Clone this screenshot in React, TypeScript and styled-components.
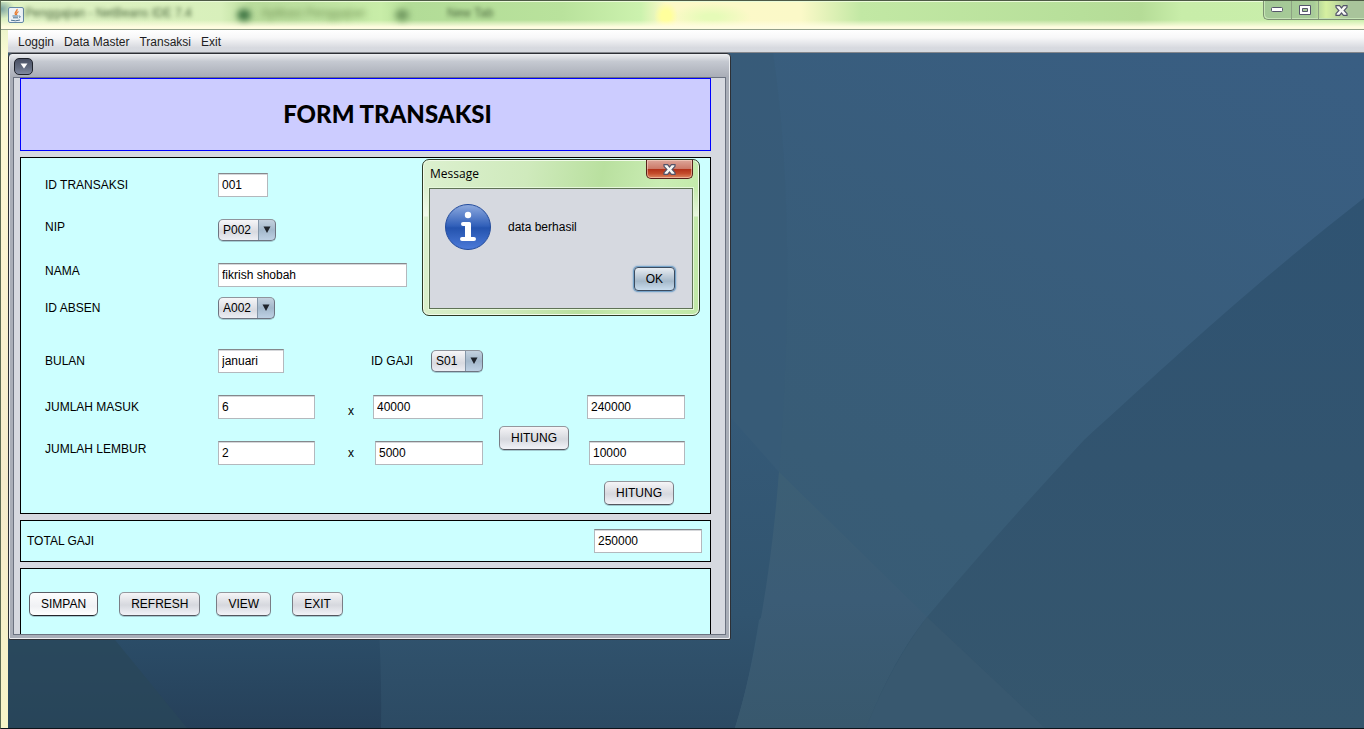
import React from 'react';
import styled, { createGlobalStyle, css } from 'styled-components';

const GlobalStyle = createGlobalStyle`
  *, *::before, *::after { box-sizing: border-box; }
  body {
    margin: 0;
    font-family: "Liberation Sans", Arial, sans-serif;
    font-size: 12px;
    line-height: 16px;
    color: #000;
  }
  button, input, select { font: inherit; color: inherit; margin: 0; }
`;

const AppWindow = styled.div`
  position: relative;
  display: flex;
  flex-direction: column;
  min-height: 100vh;
  overflow: hidden;
  padding-left: 7px;
  border-top: 1px solid #4d5a45;
  border-left: 1px solid #5d6b52;
  border-bottom: 1px solid #0c141a;
  background: linear-gradient(180deg, #dcefc0 0, #fdfbd6 60px, #fbf4d0 240px, #f5ebcb 480px, #f8f5c8 100%);
`;

const TitleBar = styled.header`
  position: relative;
  display: flex;
  justify-content: space-between;
  height: 29px;
  margin-left: -7px;
  padding-left: 7px;
  border-bottom: 1px solid #93a08a;
  box-shadow: inset 0 1px 0 #eafbd9;
  background:
    radial-gradient(ellipse 14px 10px at 0 8px, #7ba3a0 0, rgba(123, 163, 160, 0) 100%),
    linear-gradient(180deg, rgba(255, 255, 225, 0) 19px, #fffde0 26px),
    radial-gradient(ellipse 12px 14px at 665px 15px, #ffff9c 40%, rgba(255, 255, 156, 0) 100%),
    radial-gradient(ellipse 40px 14px at 710px 16px, #e6fbb8 20%, rgba(230, 251, 184, 0) 100%),
    linear-gradient(90deg, #dff2c4 0, #d8f0bb 220px, #b9dc9c 250px, #bfe3a2 320px, #c8eda8 380px, #b2dc97 410px, #b9e29c 560px, #ccf2ae 640px, #fdf9c8 665px, #fbf9c8 800px, #c2e8a4 860px, #b7df9a 1080px, #b5dc97 1140px, #c8eda9 1180px, #c9eeab 100%);
`;

const AppIcon = styled.svg`
  width: 16px;
  height: 16px;
  margin-top: 6px;
  display: block;
`;

const GlassText = styled.span<{ $left: number; $tone?: string; $blur?: number }>`
  position: absolute;
  top: 4px;
  left: ${p => p.$left}px;
  color: ${p => p.$tone || '#46633a'};
  filter: blur(${p => p.$blur || 2}px);
  white-space: nowrap;
`;

const GlassDot = styled.span<{ $left: number; $tone: string }>`
  position: absolute;
  top: 8px;
  left: ${p => p.$left}px;
  width: 14px;
  height: 12px;
  border-radius: 50%;
  background: ${p => p.$tone};
  filter: blur(3px);
`;

const WindowControls = styled.div`
  display: flex;
  height: 19px;
  border: 1px solid #7c9072;
  border-top: 0;
  border-right: 0;
  border-radius: 0 0 0 5px;
  background: linear-gradient(90deg, #a3c896 0, #a8cc98 50%, #d6f0a0 62%, #a9c49b 85%);
  box-shadow: inset 1px -1px 0 #c6e4b6;
`;

const ControlButton = styled.button<{ $wide?: boolean }>`
  display: flex;
  align-items: center;
  justify-content: center;
  width: ${p => (p.$wide ? 46 : 27)}px;
  padding: 0;
  border: 0;
  background: none;
  & + & { border-left: 1px solid #8da383; }
`;

const MenuBar = styled.nav`
  display: flex;
  gap: 10px;
  height: 23px;
  padding: 4px 10px 3px;
  border-bottom: 1px solid #83868c;
  background: linear-gradient(180deg, #fff 0, #f7f7f8 35%, #d8dae0 80%, #d6d9df 100%);
`;

const MenuButton = styled.button`
  padding: 0;
  border: 0;
  background: none;
  color: #1d1d22;
`;

const Desktop = styled.main`
  position: relative;
  flex: 1;
  min-height: 640px;
  background: #355a78;
`;

const Wallpaper = styled.svg`
  position: absolute;
  inset: 0;
  width: 100%;
  height: 100%;
`;

const InternalFrame = styled.section`
  position: absolute;
  top: 0;
  left: 0;
  width: 723px;
  padding: 0 4px 4px;
  border: 1px solid #2d3036;
  border-radius: 4px 4px 2px 2px;
  background: #a9aeb8;
  box-shadow: inset 1px 1px 0 #eceef1, inset -1px -1px 0 #eceef1;
`;

const FrameTitle = styled.div`
  display: flex;
  align-items: center;
  height: 22px;
  margin: 1px -3px 0;
  padding-left: 4px;
  background: linear-gradient(180deg, #e8eaed 0, #c5c9d1 30%, #a9adb7 100%);
`;

const FrameMenuButton = styled.button`
  display: flex;
  align-items: center;
  justify-content: center;
  width: 19px;
  height: 17px;
  padding: 0;
  border: 1px solid #20242d;
  border-radius: 5px;
  background: linear-gradient(180deg, #495063 0, #656e82 60%, #8089a0 100%);
`;

const FrameContent = styled.div`
  display: flex;
  flex-direction: column;
  gap: 6px;
  padding: 0 14px 0 6px;
  border: 1px solid #6b7280;
  background: #d6d9e0;
`;

const Banner = styled.h1`
  display: flex;
  align-items: center;
  justify-content: center;
  height: 73px;
  margin: 0;
  padding: 0 0 2px 44px;
  border: 1px solid #0000ff;
  background: #ccccff;
  font-family: Lato, sans-serif;
  font-size: 24px;
  font-weight: 900;
  line-height: 28px;
`;

const panel = css`
  border: 1px solid #000;
  background: #ccffff;
`;

const FormPanel = styled.form`
  ${panel}
  display: flex;
  flex-direction: column;
  height: 357px;
  padding: 15px 24px 0;
`;

const Row = styled.div<{ $gap?: number; $align?: string }>`
  display: flex;
  align-items: ${p => p.$align || 'center'};
  margin-top: ${p => p.$gap || 0}px;
`;

const Label = styled.label<{ $width?: number; $align?: string }>`
  width: ${p => p.$width || 173}px;
  align-self: ${p => p.$align || 'auto'};
  white-space: nowrap;
`;

const TextInput = styled.input<{ $width: number }>`
  width: ${p => p.$width}px;
  height: 24px;
  padding: 0 3px;
  border: 1px solid #b4b8bd;
  border-top-color: #85888c;
  border-radius: 0;
  background: #fff;
  box-shadow: inset 0 1px 0 #d5d7da;
  outline: 0;
`;

const SelectBox = styled.span<{ $width: number }>`
  position: relative;
  display: flex;
  width: ${p => p.$width}px;
  height: 22px;
`;

const Select = styled.select`
  appearance: none;
  width: 100%;
  padding: 0 20px 0 4px;
  border: 1px solid #6d7480;
  border-top-color: #8f949c;
  border-radius: 5px;
  background:
    linear-gradient(180deg, #c4d2df 0, #a3b8cb 50%, #bed1e4 100%) right / 17px 100% no-repeat,
    linear-gradient(180deg, #f6f6f8 0, #d8dae0 60%, #eceef4 100%);
  box-shadow: 0 1px 0 rgba(90, 110, 130, 0.35);
  outline: 0;
`;

const SelectArrow = styled.svg`
  position: absolute;
  top: 0;
  right: 0;
  width: 18px;
  height: 22px;
  pointer-events: none;
`;

const CalcGrid = styled.div`
  display: grid;
  grid-template-columns: 173px 130px 25px 110px 104px 98px;
  grid-template-rows: 24px 24px;
  row-gap: 22px;
  align-items: center;
  margin-top: 22px;
`;

const Times = styled.span<{ $align?: string }>`
  align-self: ${p => p.$align || 'center'};
`;

const CalcEnd = styled.div<{ $column: number }>`
  grid-column: ${p => p.$column};
  display: flex;
  justify-content: flex-end;
`;

const SpanningCell = styled.div`
  grid-column: 5;
  grid-row: 1 / 3;
  display: flex;
  justify-content: center;
  padding: 16px 2px 0 0;
`;

const Button = styled.button<{ $bright?: boolean }>`
  height: 24px;
  padding: 0 11px;
  border: 1px solid #7a7d85;
  border-top-color: #94979d;
  border-bottom-color: #54575f;
  border-radius: 5px;
  background: ${p =>
    p.$bright
      ? 'linear-gradient(180deg, #fdfdfe 0, #f0f1f4 60%, #ffffff 100%)'
      : 'linear-gradient(180deg, #f5f5f7 0, #d6d8de 55%, #f2f3f8 100%)'};
  box-shadow: 0 1px 0 rgba(100, 120, 135, 0.4);
  white-space: nowrap;
  ${p => p.$bright && css`border-color: #5a5d66; border-bottom-color: #25272c;`}
`;

const SumRow = styled.div`
  display: flex;
  justify-content: flex-end;
  margin-top: 16px;
  padding-right: 12px;
`;

const TotalPanel = styled.div`
  ${panel}
  display: flex;
  align-items: center;
  justify-content: space-between;
  height: 42px;
  padding: 0 8px 0 6px;
`;

const ActionPanel = styled.div`
  ${panel}
  display: flex;
  gap: 21px;
  height: 66px;
  padding: 23px 8px 0;
  border-bottom: 0;
`;

const ButtonPair = styled.div`
  display: flex;
  gap: 16px;
`;

const Dialog = styled.div`
  position: absolute;
  top: 106px;
  left: 414px;
  width: 278px;
  padding: 0 6px 6px;
  border: 1px solid #2c3a26;
  border-radius: 7px;
  background:
    linear-gradient(180deg, rgba(255, 255, 255, 0) 28px, rgba(255, 255, 255, 0.6) 56px, rgba(255, 255, 255, 0) 57px),
    linear-gradient(100deg, #dcf0cf 0, #cfeabc 35%, #b9e09f 60%, #caedb4 80%, #c0e8a6 100%);
  box-shadow: inset 0 0 0 1px #f1fbe9;
`;

const DialogTitle = styled.div`
  display: flex;
  justify-content: space-between;
  height: 28px;
  padding-left: 1px;
  font-family: "Open Sans", sans-serif;
`;

const DialogName = styled.span`
  margin-top: 6px;
`;

const DialogClose = styled.button`
  display: flex;
  align-items: center;
  justify-content: center;
  width: 47px;
  height: 19px;
  padding: 0;
  border: 1px solid #562018;
  border-top: 0;
  border-radius: 0 0 5px 5px;
  background: linear-gradient(180deg, #dda69a 0, #cc7a69 48%, #b2321a 52%, #c44d2c 75%, #dd8a62 100%);
  box-shadow: inset 0 0 0 1px rgba(255, 225, 210, 0.5);
`;

const DialogBody = styled.div`
  height: 121px;
  padding: 15px 17px 0 15px;
  border: 1px solid #5f7356;
  background: #d6d9e0;
  box-shadow: 0 0 0 1px #e6f8da;
`;

const DialogMessage = styled.div`
  display: flex;
  align-items: center;
  gap: 17px;
`;

const DialogActions = styled.div`
  display: flex;
  justify-content: flex-end;
  margin-top: 17px;
`;

const OkButton = styled.button`
  height: 24px;
  padding: 0 11px;
  border: 1px solid #3b4c60;
  border-radius: 4px;
  background: linear-gradient(180deg, #e8edf2 0, #bccad7 40%, #a5b9ca 60%, #c9dced 100%);
  box-shadow: 0 0 0 1px #77a3c9, 0 0 2px 1px #77a3c9;
`;

function Arrow() {
  return (
    <SelectArrow viewBox="0 0 18 22" aria-hidden="true">
      <path d="M0.5 1V21" stroke="#8496a8" />
      <path d="M5.5 7.5H12.5L9 14Z" fill="#1f242b" />
    </SelectArrow>
  );
}

function CloseGlyph() {
  return (
    <svg width="13" height="11" viewBox="0 0 13 11" aria-hidden="true">
      <path d="M1 0.7H4.6L6.5 3L8.4 0.7H12V2.3L9.1 5.5L12 8.7V10.3H8.4L6.5 8L4.6 10.3H1V8.7L3.9 5.5L1 2.3Z" fill="#f8f8f4" stroke="#53546a" strokeWidth="1.2" />
    </svg>
  );
}

function DesktopWallpaper() {
  return (
    <Wallpaper viewBox="0 0 1356 675" preserveAspectRatio="none" aria-hidden="true">
      <defs>
        <linearGradient id="base" x1="0" y1="1" x2="1" y2="0">
          <stop offset="0" stopColor="#3a5970" />
          <stop offset="0.5" stopColor="#385c76" />
          <stop offset="1" stopColor="#395e83" />
        </linearGradient>
        <linearGradient id="right" x1="0" y1="0" x2="0" y2="1">
          <stop offset="0" stopColor="#2f5372" />
          <stop offset="0.5" stopColor="#32546f" />
          <stop offset="1" stopColor="#35566d" />
        </linearGradient>
        <linearGradient id="left" x1="0" y1="0" x2="0" y2="1">
          <stop offset="0" stopColor="#355a78" />
          <stop offset="0.65" stopColor="#31546f" />
          <stop offset="1" stopColor="#2c4a63" />
        </linearGradient>
        <linearGradient id="corner" x1="0" y1="0" x2="0" y2="1">
          <stop offset="0.2" stopColor="#2b4d68" />
          <stop offset="1" stopColor="#264059" />
        </linearGradient>
        <linearGradient id="wedge" x1="0" y1="0" x2="0" y2="1">
          <stop offset="0" stopColor="#3c5f75" />
          <stop offset="0.5" stopColor="#3b5c76" />
          <stop offset="1" stopColor="#38586d" />
        </linearGradient>
      </defs>
      <rect width="1356" height="675" fill="url(#base)" />
      <path d="M560 0H765Q790 170 771 419L722 367L560 200Z" fill="#385b78" opacity="0.7" />
      <path d="M0 350H710L771 419C766 500 760 560 751 567C745 605 737 645 727 675H0Z" fill="url(#left)" />
      <path d="M771 419L919 564L1037 675H727C750 600 764 510 771 419Z" fill="url(#wedge)" />
      <path d="M1356 145C1240 235 1150 320 1076 387C1010 458 960 515 919 564C890 600 872 640 858 675H1356Z" fill="url(#right)" />
      <path d="M919 564L1037 675H858Q884 610 919 564Z" fill="#39596f" opacity="0.8" />
      <path d="M0 560H370Q374 620 373 675H0Z" fill="url(#corner)" />
      <path d="M0 560H85L179 675H0Z" fill="#294759" opacity="0.75" />
    </Wallpaper>
  );
}

function MessageDialog() {
  return (
    <Dialog role="dialog" aria-labelledby="dialog-name">
      <DialogTitle>
        <DialogName id="dialog-name">Message</DialogName>
        <DialogClose type="button" aria-label="Close message"><CloseGlyph /></DialogClose>
      </DialogTitle>
      <DialogBody>
        <DialogMessage>
          <svg width="46" height="46" viewBox="0 0 46 46" aria-hidden="true">
            <defs>
              <linearGradient id="info" x1="0" y1="0" x2="0" y2="1">
                <stop offset="0" stopColor="#8fabdf" />
                <stop offset="0.48" stopColor="#305fb9" />
                <stop offset="0.52" stopColor="#2453ae" />
                <stop offset="1" stopColor="#4d7bd9" />
              </linearGradient>
            </defs>
            <circle cx="23" cy="23" r="22.5" fill="url(#info)" stroke="#244c9c" />
            <circle cx="23" cy="11" r="3.2" fill="#fff" />
            <path d="M18 18H24.5Q26 18 26 19.5V33H29Q31 33 31 35Q31 37 29 37H17Q15 37 15 35Q15 33 17 33H20V22H18Q16 22 16 20Q16 18 18 18Z" fill="#fff" />
          </svg>
          <span>data berhasil</span>
        </DialogMessage>
        <DialogActions><OkButton type="button">OK</OkButton></DialogActions>
      </DialogBody>
    </Dialog>
  );
}

function Combo({ id, value, width }: { id: string; value: string; width: number }) {
  return (
    <SelectBox $width={width}>
      <Select id={id} defaultValue={value}><option>{value}</option></Select>
      <Arrow />
    </SelectBox>
  );
}

export default function App() {
  return (
    <>
      <GlobalStyle />
      <AppWindow>
        <TitleBar>
          <AppIcon viewBox="0 0 16 16" aria-hidden="true">
            <rect x="0.5" y="0.5" width="15" height="15" rx="1.5" fill="#edf2f7" stroke="#6487a5" />
            <path d="M9 2C10 4 5.500 5 7.500 8M10.500 4.500C8 5.500 8.500 6.500 8.500 8" fill="none" stroke="#e8792b" strokeWidth="1.300" />
            <path d="M4.500 9H10.500M5 10.800H10M3 13.200Q7.500 14.500 12 13M11 9Q13.500 9 11 11.200" fill="none" stroke="#4f7593" />
          </AppIcon>
          <GlassText $left={24} aria-hidden="true">Penggajian - NetBeans IDE 7.4</GlassText>
          <GlassDot $left={236} $tone="#3f7544" />
          <GlassText $left={260} $blur={3} $tone="#6f9152" aria-hidden="true">Aplikasi Penggajian</GlassText>
          <GlassDot $left={394} $tone="#739b62" />
          <GlassText $left={446} aria-hidden="true">New Tab</GlassText>
          <WindowControls>
            <ControlButton type="button" aria-label="Minimize">
              <svg width="13" height="6" viewBox="0 0 13 6" aria-hidden="true">
                <rect x="0.5" y="0.5" width="11" height="4" rx="1" fill="#fff" stroke="#55566b" />
              </svg>
            </ControlButton>
            <ControlButton type="button" aria-label="Maximize">
              <svg width="12" height="10" viewBox="0 0 12 10" aria-hidden="true">
                <path fillRule="evenodd" d="M0.5 0.5H11.5V9.500H0.500ZM3.500 3.500V6.500H8.500V3.500Z" fill="#fff" stroke="#55566b" />
              </svg>
            </ControlButton>
            <ControlButton type="button" $wide aria-label="Close"><CloseGlyph /></ControlButton>
          </WindowControls>
        </TitleBar>
        <MenuBar>
          <MenuButton type="button">Loggin</MenuButton>
          <MenuButton type="button">Data Master</MenuButton>
          <MenuButton type="button">Transaksi</MenuButton>
          <MenuButton type="button">Exit</MenuButton>
        </MenuBar>
        <Desktop>
          <DesktopWallpaper />
          <InternalFrame>
            <FrameTitle>
              <FrameMenuButton type="button" aria-label="Frame menu">
                <svg width="8" height="6" viewBox="0 0 8 6" aria-hidden="true"><path d="M0.500 0.500H7.500L4 5.500Z" fill="#fff" /></svg>
              </FrameMenuButton>
            </FrameTitle>
            <FrameContent>
              <Banner>FORM TRANSAKSI</Banner>
              <FormPanel>
                <Row>
                  <Label htmlFor="id-transaksi">ID TRANSAKSI</Label>
                  <TextInput id="id-transaksi" $width={50} defaultValue="001" />
                </Row>
                <Row $gap={22} $align="flex-start">
                  <Label htmlFor="nip">NIP</Label>
                  <Combo id="nip" value="P002" width={58} />
                </Row>
                <Row $gap={22} $align="flex-start">
                  <Label htmlFor="nama">NAMA</Label>
                  <TextInput id="nama" $width={189} defaultValue="fikrish shobah" />
                </Row>
                <Row $gap={10}>
                  <Label htmlFor="id-absen">ID ABSEN</Label>
                  <Combo id="id-absen" value="A002" width={57} />
                </Row>
                <Row $gap={30}>
                  <Label htmlFor="bulan">BULAN</Label>
                  <Label as="span" $width={153}><TextInput id="bulan" $width={66} defaultValue="januari" /></Label>
                  <Label htmlFor="id-gaji" $width={60}>ID GAJI</Label>
                  <Combo id="id-gaji" value="S01" width={52} />
                </Row>
                <CalcGrid>
                  <Label htmlFor="masuk">JUMLAH MASUK</Label>
                  <TextInput id="masuk" $width={97} defaultValue="6" />
                  <Times $align="end">x</Times>
                  <TextInput aria-label="Tarif masuk" $width={110} defaultValue="40000" />
                  <SpanningCell><Button type="button">HITUNG</Button></SpanningCell>
                  <CalcEnd $column={6}><TextInput aria-label="Hasil masuk" $width={98} defaultValue="240000" /></CalcEnd>
                  <Label htmlFor="lembur" $align="start">JUMLAH LEMBUR</Label>
                  <TextInput id="lembur" $width={97} defaultValue="2" />
                  <Times>x</Times>
                  <CalcEnd $column={4}><TextInput aria-label="Tarif lembur" $width={108} defaultValue="5000" /></CalcEnd>
                  <CalcEnd $column={6}><TextInput aria-label="Hasil lembur" $width={96} defaultValue="10000" /></CalcEnd>
                </CalcGrid>
                <SumRow><Button type="button">HITUNG</Button></SumRow>
              </FormPanel>
              <TotalPanel>
                <Label htmlFor="total">TOTAL GAJI</Label>
                <TextInput id="total" $width={108} defaultValue="250000" />
              </TotalPanel>
              <ActionPanel>
                <Button type="button" $bright>SIMPAN</Button>
                <ButtonPair>
                  <Button type="button">REFRESH</Button>
                  <Button type="button">VIEW</Button>
                </ButtonPair>
                <Button type="button">EXIT</Button>
              </ActionPanel>
            </FrameContent>
          </InternalFrame>
          <MessageDialog />
        </Desktop>
      </AppWindow>
    </>
  );
}
